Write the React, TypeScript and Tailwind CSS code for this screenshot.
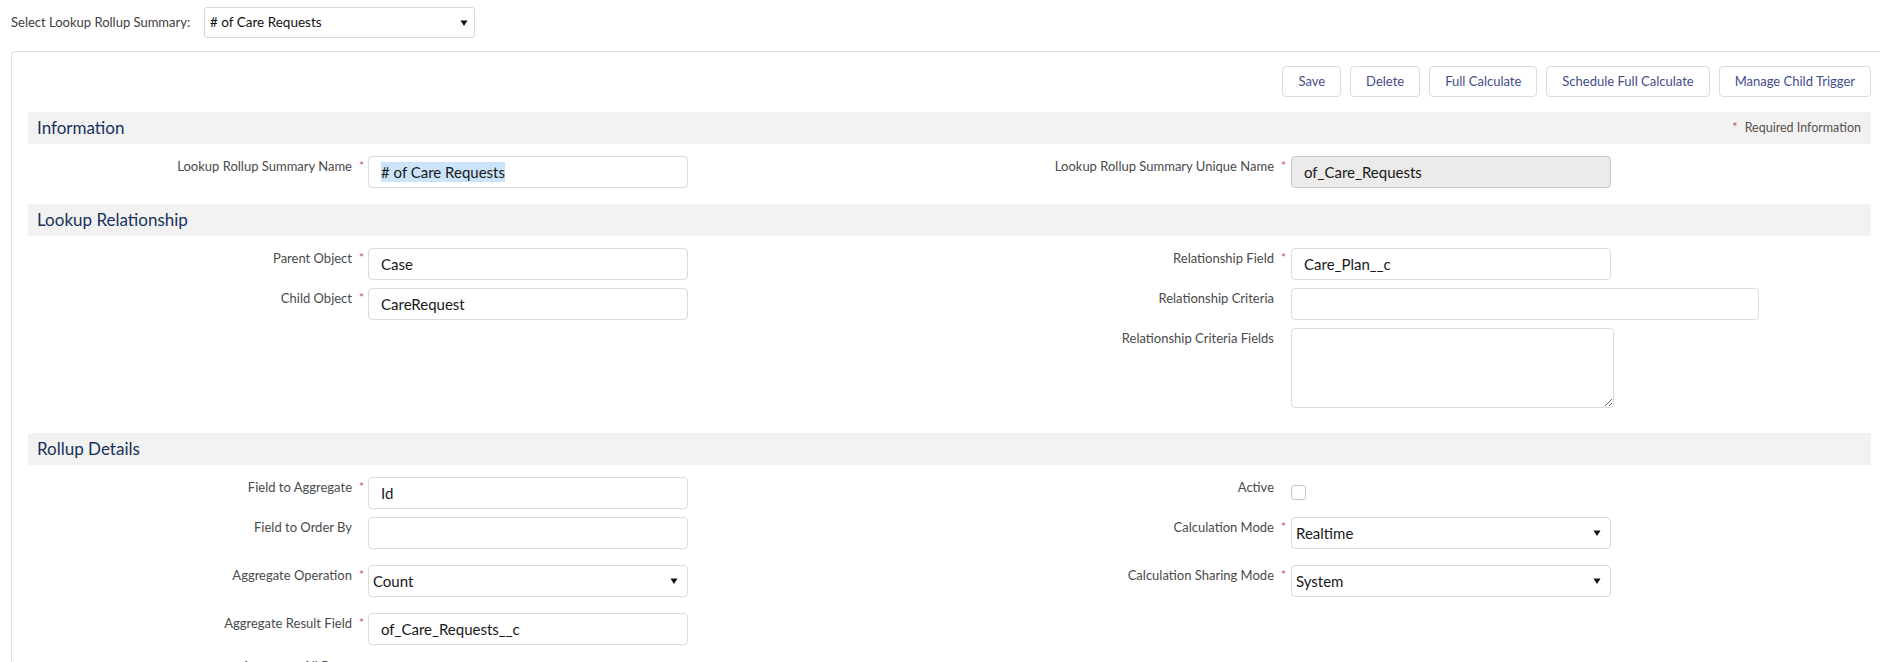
import React from "react";

function Arrow() {
  return (
    <svg width="8" height="8" viewBox="0 0 8 8" className="shrink-0">
      <polygon points="0.5,1.5 7.5,1.5 4,7" fill="#111" />
    </svg>
  );
}

function TextBox({
  value,
  width = "w-[320px]",
  highlight = false,
  readOnly = false,
}: {
  value?: string;
  width?: string;
  highlight?: boolean;
  readOnly?: boolean;
}) {
  return (
    <div
      className={`${width} h-[32px] flex items-center border rounded-[4px] px-[12px] text-[15px] text-[#181818] ${
        readOnly ? "bg-[#ecebea] border-[#c9c7c5]" : "bg-white border-[#dddbda]"
      }`}
    >
      {highlight ? <span className="bg-[#cce4f9] leading-[20px]">{value}</span> : <span>{value}</span>}
    </div>
  );
}

function SelectBox({ value, width = "w-[320px]" }: { value: string; width?: string }) {
  return (
    <div
      className={`${width} h-[32px] flex items-center justify-between border border-[#dddbda] rounded-[4px] pl-[4px] pr-[9px] text-[15px] text-[#181818] bg-white`}
    >
      <span>{value}</span>
      <Arrow />
    </div>
  );
}

function Field({
  label,
  required = false,
  children,
  right = false,
}: {
  label?: string;
  required?: boolean;
  children?: React.ReactNode;
  right?: boolean;
}) {
  return (
    <div className={`flex items-start ${right ? "flex-1" : "w-[922px] shrink-0"}`}>
      <div className="w-[324px] shrink-0 text-right pt-px leading-[18px] text-[13px] text-[#4a4a4a]">{label}</div>
      <div className={`${right ? "w-[17px]" : "w-[16px]"} shrink-0 pl-[7px] pt-[2px] leading-[16px] text-[12px] text-[#c8574f]`}>
        {required ? "*" : ""}
      </div>
      <div>{children}</div>
    </div>
  );
}

function Row({ children, className = "" }: { children: React.ReactNode; className?: string }) {
  return <div className={`flex ${className}`}>{children}</div>;
}

function Header({ title, right }: { title: string; right?: React.ReactNode }) {
  return (
    <div className="h-[32px] bg-[#f3f2f2] flex items-center justify-between pl-[9px] pr-[10px]">
      <span className="text-[17px] text-[#16325c]">{title}</span>
      {right}
    </div>
  );
}

function Button({ children }: { children: React.ReactNode }) {
  return (
    <div className="h-[31px] px-[15px] flex items-center border border-[#dddbda] rounded-[4px] bg-white text-[13px] text-[#3f4d8c]">
      {children}
    </div>
  );
}

function Checkbox() {
  return <div className="w-[15px] h-[15px] border border-[#c9c7c5] rounded-[3px] bg-white" />;
}

export default function App() {
  return (
    <div className="w-[1880px] h-[662px] overflow-hidden bg-white font-[Lato,'Open_Sans',sans-serif]">
      <div className="flex items-center pt-[7px] pl-[11px]">
        <div className="w-[193px] text-[13px] text-[#3e3e3c]">Select Lookup Rollup Summary:</div>
        <div className="w-[271px] h-[31px] flex items-center justify-between border border-[#d8d8d8] rounded-[3px] pl-[5px] pr-[6px] text-[13.5px] text-[#111]">
          <span># of Care Requests</span>
          <Arrow />
        </div>
      </div>

      <div className="mt-[13px] ml-[11px] w-[1877px] border border-[#d8dde6] rounded-[4px] pt-[14px] px-[16px] pb-[20px]">
        <div className="flex justify-end gap-[9px]">
          <Button>Save</Button>
          <Button>Delete</Button>
          <Button>Full Calculate</Button>
          <Button>Schedule Full Calculate</Button>
          <Button>Manage Child Trigger</Button>
        </div>

        <div className="mt-[15px]">
          <Header
            title="Information"
            right={
              <span className="text-[12.5px] text-[#54514e]">
                <span className="text-[#c8574f] mr-[7px]">*</span>Required Information
              </span>
            }
          />
          <div className="pt-[12px] pb-[16px]">
            <Row>
              <Field label="Lookup Rollup Summary Name" required>
                <TextBox value="# of Care Requests" highlight />
              </Field>
              <Field label="Lookup Rollup Summary Unique Name" required right>
                <TextBox value="of_Care_Requests" readOnly />
              </Field>
            </Row>
          </div>
        </div>

        <div>
          <Header title="Lookup Relationship" />
          <div className="pt-[12px] pb-[25px]">
            <Row>
              <Field label="Parent Object" required>
                <TextBox value="Case" />
              </Field>
              <Field label="Relationship Field" required right>
                <TextBox value="Care_Plan__c" />
              </Field>
            </Row>
            <Row className="mt-[8px]">
              <Field label="Child Object" required>
                <TextBox value="CareRequest" />
              </Field>
              <Field label="Relationship Criteria" right>
                <TextBox value="" width="w-[468px]" />
              </Field>
            </Row>
            <Row className="mt-[8px]">
              <Field />
              <Field label="Relationship Criteria Fields" right>
                <textarea
                  className="block w-[323px] h-[80px] border border-[#dddbda] rounded-[4px] bg-white outline-none"
                  defaultValue=""
                />
              </Field>
            </Row>
          </div>
        </div>

        <div>
          <Header title="Rollup Details" />
          <div className="pt-[12px]">
            <Row>
              <Field label="Field to Aggregate" required>
                <TextBox value="Id" />
              </Field>
              <Field label="Active" right>
                <div className="pt-[8px]">
                  <Checkbox />
                </div>
              </Field>
            </Row>
            <Row className="mt-[8px]">
              <Field label="Field to Order By">
                <TextBox value="" />
              </Field>
              <Field label="Calculation Mode" required right>
                <SelectBox value="Realtime" />
              </Field>
            </Row>
            <Row className="mt-[16px]">
              <Field label="Aggregate Operation" required>
                <SelectBox value="Count" />
              </Field>
              <Field label="Calculation Sharing Mode" required right>
                <SelectBox value="System" />
              </Field>
            </Row>
            <Row className="mt-[16px]">
              <Field label="Aggregate Result Field" required>
                <TextBox value="of_Care_Requests__c" />
              </Field>
              <Field right />
            </Row>
            <Row className="mt-[11px]">
              <Field label="Aggregate All Rows">
                <div className="pt-[7px]">
                  <Checkbox />
                </div>
              </Field>
              <Field right />
            </Row>
          </div>
        </div>
      </div>
    </div>
  );
}
